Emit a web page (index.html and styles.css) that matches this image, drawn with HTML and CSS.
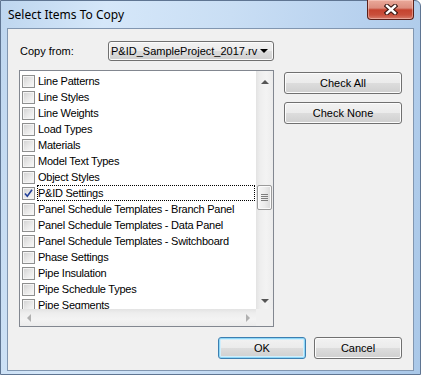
FILE: index.html
```html
<!DOCTYPE html>
<html lang="en">
<head>
    <meta charset="UTF-8">
    <title>Select Items To Copy</title>
    <link rel="stylesheet" href="styles.css">
</head>
<body>

    <div class="window">
        <div class="titlebar">
            <span class="title">Select Items To Copy</span>
            <div class="close">
                <svg width="14" height="11" viewBox="0 0 14 11">
                    <path d="M3 2 L11 9 M11 2 L3 9" stroke="#3a1712" stroke-width="4.6" stroke-linecap="square" fill="none"/>
                    <path d="M3 2 L11 9 M11 2 L3 9" stroke="#ffffff" stroke-width="2.4" stroke-linecap="square" fill="none"/>
                </svg>
            </div>
        </div>

        <div class="client">
            <div class="copy-row">
                <span class="copy-label">Copy from:</span>
                <div class="combo">
                    <span>P&amp;ID_SampleProject_2017.rv</span>
                    <span class="arrow-down dark"></span>
                </div>
            </div>

            <div class="main">
                <div class="listbox">
                    <div class="items">
                        <div class="item"><span class="check"></span><span class="label">Line Patterns</span></div>
                        <div class="item"><span class="check"></span><span class="label">Line Styles</span></div>
                        <div class="item"><span class="check"></span><span class="label">Line Weights</span></div>
                        <div class="item"><span class="check"></span><span class="label">Load Types</span></div>
                        <div class="item"><span class="check"></span><span class="label">Materials</span></div>
                        <div class="item"><span class="check"></span><span class="label">Model Text Types</span></div>
                        <div class="item"><span class="check"></span><span class="label">Object Styles</span></div>
                        <div class="item focused">
                            <span class="check">
                                <svg width="11" height="11" viewBox="0 0 11 11">
                                    <path d="M2 5.5 L4.3 8.3 L9 1.8" stroke="#223f99" stroke-width="1.6" fill="none"/>
                                </svg>
                            </span>
                            <span class="label">P&amp;ID Settings</span>
                        </div>
                        <div class="item"><span class="check"></span><span class="label">Panel Schedule Templates - Branch Panel</span></div>
                        <div class="item"><span class="check"></span><span class="label">Panel Schedule Templates - Data Panel</span></div>
                        <div class="item"><span class="check"></span><span class="label">Panel Schedule Templates - Switchboard</span></div>
                        <div class="item"><span class="check"></span><span class="label">Phase Settings</span></div>
                        <div class="item"><span class="check"></span><span class="label">Pipe Insulation</span></div>
                        <div class="item"><span class="check"></span><span class="label">Pipe Schedule Types</span></div>
                        <div class="item"><span class="check"></span><span class="label">Pipe Segments</span></div>
                    </div>

                    <div class="vscroll">
                        <div class="sb-btn"><span class="arrow-up"></span></div>
                        <div class="track">
                            <div class="thumb">
                                <span class="grip"></span>
                            </div>
                        </div>
                        <div class="sb-btn"><span class="arrow-down"></span></div>
                    </div>

                    <div class="hscroll">
                        <div class="sb-btn"><span class="arrow-left"></span></div>
                        <div class="sb-btn"><span class="arrow-right"></span></div>
                    </div>
                    <div class="corner"></div>
                </div>

                <div class="side">
                    <button class="btn btn-side">Check All</button>
                    <button class="btn btn-side">Check None</button>
                </div>
            </div>

            <div class="footer">
                <button class="btn btn-default">OK</button>
                <button class="btn">Cancel</button>
            </div>
        </div>
    </div>

</body>
</html>
```

FILE: styles.css
```css
body {
    margin: 0;
    font-family: "Liberation Sans", Arial, sans-serif;
    font-size: 11px;
    color: #000;
}

.window {
    width: 421px;
    height: 375px;
    box-sizing: border-box;
    border: 1px solid #5f7592;
    border-radius: 0 6px 0 0;
    background: linear-gradient(100deg, #bed6ef 0%, #d5e7f9 22%, #c9def4 48%, #b7d1ee 75%, #aac8e8 100%);
    display: flex;
    flex-direction: column;
}

.titlebar {
    height: 27px;
    display: flex;
    align-items: flex-start;
}

.title {
    font-family: "Noto Sans", sans-serif;
    font-size: 12px;
    padding: 5px 0 0 7px;
    color: #000;
}

.close {
    margin: -1px 6px 0 auto;
    width: 45px;
    height: 19px;
    border: 1px solid #5b2019;
    border-top: none;
    border-radius: 0 0 4px 4px;
    background: linear-gradient(#eaa99a 0%, #dc8d7e 42%, #c5432f 52%, #c94f3b 78%, #d77c6b 100%);
    box-shadow: inset 0 0 0 1px rgba(255, 220, 210, 0.45);
    display: flex;
    align-items: center;
    justify-content: center;
}

.client {
    margin: 0 6px 3px 6px;
    height: 343px;
    box-sizing: border-box;
    border: 1px solid #8196b0;
    background-color: #f0f0f0;
    padding: 12px 11px 11px 11px;
}

.copy-row {
    display: flex;
    height: 20px;
    align-items: center;
}

.copy-label {
    width: 88px;
    padding-left: 1px;
}

.combo {
    width: 166px;
    height: 20px;
    box-sizing: border-box;
    border: 1px solid #707070;
    border-radius: 3px;
    background: linear-gradient(#f2f2f2 0%, #ebebeb 50%, #dddddd 50%, #cfcfcf 100%);
    box-shadow: inset 0 0 0 1px #fbfbfb;
    display: flex;
    align-items: center;
    justify-content: space-between;
    padding: 0 5px 0 2px;
}

.main {
    display: flex;
    gap: 10px;
    margin-top: 9px;
}

.listbox {
    width: 255px;
    height: 257px;
    box-sizing: border-box;
    border: 1px solid #828790;
    background-color: #fff;
    display: grid;
    grid-template-columns: 1fr 17px;
    grid-template-rows: 1fr 17px;
}

.items {
    overflow: hidden;
    padding-top: 2px;
}

.item {
    height: 16px;
    display: flex;
    align-items: center;
}

.check {
    width: 13px;
    height: 13px;
    box-sizing: border-box;
    margin-left: 2px;
    border: 1px solid #8e8f8f;
    background: linear-gradient(135deg, #d0d0d0 0%, #e8e8e8 50%, #fafafa 100%);
    box-shadow: inset 0 0 0 1px #f4f4f4;
    display: flex;
    align-items: center;
    justify-content: center;
}

.label {
    flex: 1;
    height: 16px;
    box-sizing: border-box;
    margin: 0 1px 0 2px;
    padding-left: 1px;
    line-height: 16px;
    letter-spacing: -0.25px;
    white-space: nowrap;
}

.focused .label {
    outline: 1px dotted #000;
    outline-offset: -1px;
}

.vscroll {
    display: flex;
    flex-direction: column;
    background: linear-gradient(to right, #e3e3e3 0%, #eeeeee 25%, #f3f3f3 60%, #ececec 100%);
}

.sb-btn {
    height: 17px;
    flex: none;
    display: flex;
    align-items: center;
    justify-content: center;
}

.vscroll .sb-btn:first-child {
    padding-top: 4px;
    box-sizing: border-box;
}

.track {
    flex: 1;
}

.thumb {
    margin: 97px 1px 0 1px;
    height: 25px;
    box-sizing: border-box;
    border: 1px solid #9b9b9b;
    border-radius: 2px;
    background: linear-gradient(to right, #f6f6f6 0%, #ececec 50%, #dadada 100%);
    box-shadow: inset 0 0 0 1px #fbfbfb;
    display: flex;
    align-items: center;
    justify-content: center;
}

.grip {
    width: 7px;
    height: 7px;
    background: repeating-linear-gradient(#7d7d7d 0, #7d7d7d 1px, transparent 1px, transparent 2px);
}

.hscroll {
    display: flex;
    justify-content: space-between;
    background: linear-gradient(#e3e3e3 0%, #eeeeee 25%, #f3f3f3 60%, #ececec 100%);
}

.hscroll .sb-btn {
    width: 17px;
}

.corner {
    background-color: #f0f0f0;
}

.arrow-up {
    border-left: 4px solid transparent;
    border-right: 4px solid transparent;
    border-bottom: 4px solid #555;
}

.arrow-down {
    border-left: 4px solid transparent;
    border-right: 4px solid transparent;
    border-top: 4px solid #555;
}

.arrow-down.dark {
    border-top-color: #000;
}

.arrow-left {
    border-top: 4px solid transparent;
    border-bottom: 4px solid transparent;
    border-right: 4px solid #b0b0b0;
}

.arrow-right {
    border-top: 4px solid transparent;
    border-bottom: 4px solid transparent;
    border-left: 4px solid #b0b0b0;
}

.side {
    display: flex;
    flex-direction: column;
    gap: 8px;
    margin-top: 2px;
}

.btn {
    width: 88px;
    height: 22px;
    padding: 0;
    font-family: "Liberation Sans", Arial, sans-serif;
    font-size: 11px;
    color: #000;
    border: 1px solid #707070;
    border-radius: 3px;
    background: linear-gradient(#f2f2f2 0%, #ebebeb 50%, #dddddd 50%, #cfcfcf 100%);
    box-shadow: inset 0 0 0 1px #fcfcfc;
}

.btn-side {
    width: 118px;
}

.btn-default {
    border-color: #3c7fb1;
    box-shadow: inset 0 0 0 1px #8fd7f7, inset 0 0 0 2px #d2eefb;
}

.footer {
    display: flex;
    justify-content: flex-end;
    gap: 8px;
    margin-top: 10px;
}
```
